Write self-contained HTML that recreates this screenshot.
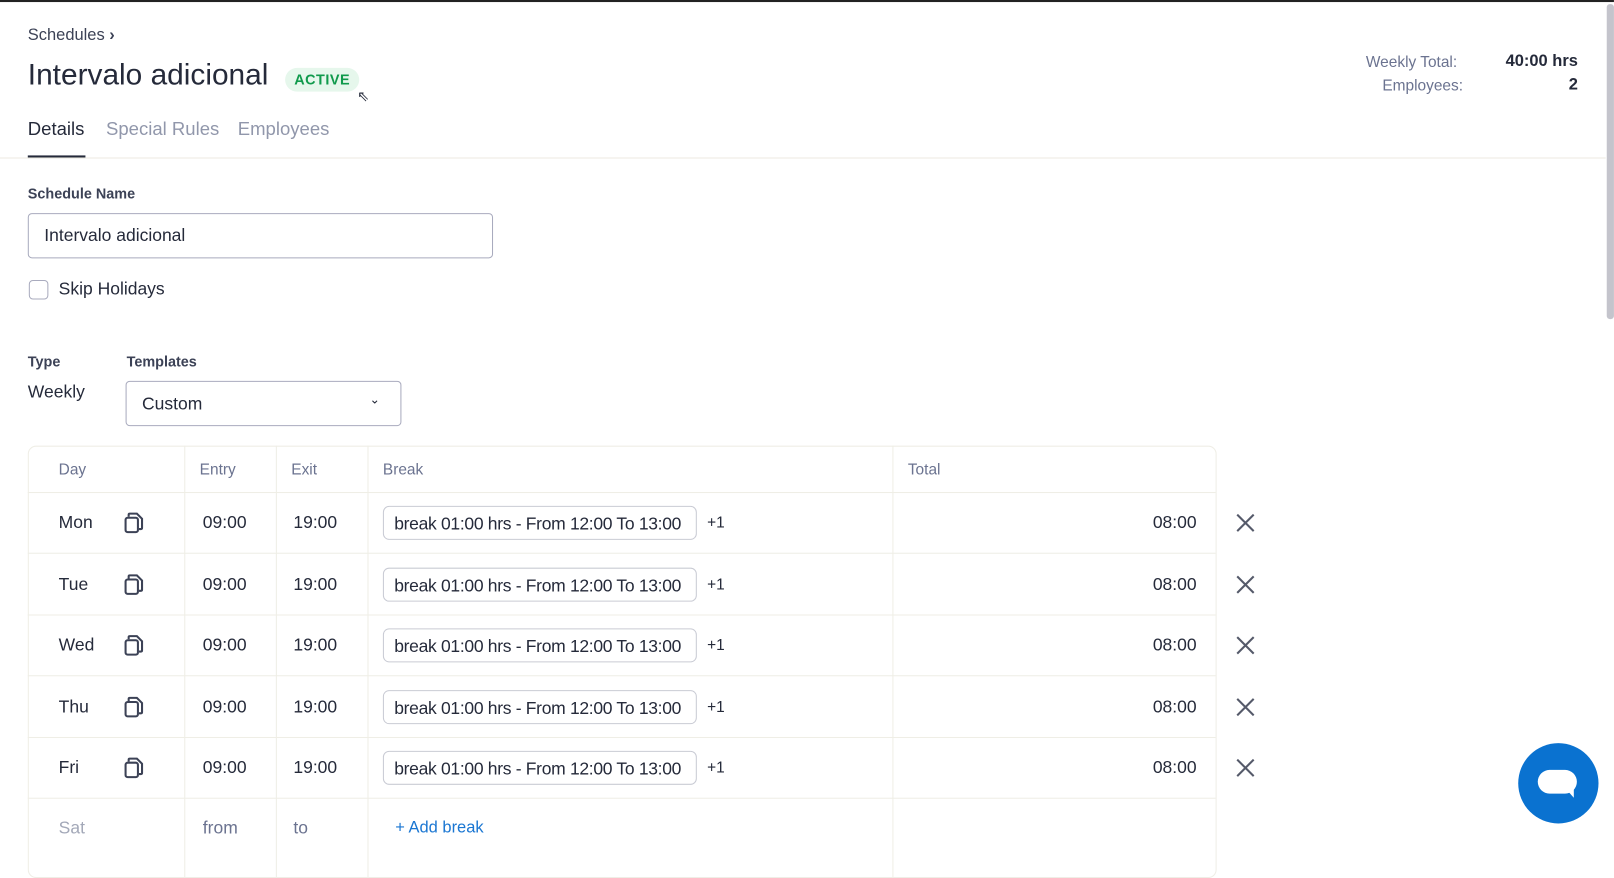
<!DOCTYPE html>
<html><head><style>
*{box-sizing:border-box;margin:0;padding:0}
body{width:1614px;height:840px;overflow:hidden;background:#fff;font-family:"Liberation Sans",sans-serif;color:#252a3a;position:relative}
#w{position:absolute;left:0;top:0;width:1568px;height:816px;transform:scale(1.0293);transform-origin:0 0}
.a{position:absolute;white-space:nowrap}
.muted{color:#6b7390}
.row{position:absolute;left:27px;width:1154px;border-top:1px solid #efeee6}
.cell{position:absolute;font-size:17px;top:50%;transform:translateY(-50%)}
.pill{position:absolute;left:345px;width:305px;height:33px;top:50%;transform:translateY(-50%);border:1px solid #c9cbd4;border-radius:6px;font-size:17px;padding:7px 0 0 10px;letter-spacing:-0.3px}
.x{position:absolute;left:1174px;top:50%;transform:translateY(-50%)}
</style></head><body><div id="w">
<div class="a" style="left:0;top:0;width:1568px;height:2px;background:#222"></div>
<div class="a" style="left:1561px;top:4px;width:7px;height:306px;background:#c4c4cc;border-radius:3px"></div>
<div class="a" style="left:27px;top:26px;font-size:16px;color:#3c4256">Schedules <span style="font-weight:bold">›</span></div>
<div class="a" style="left:27px;top:57px;font-size:29px;color:#252a3a">Intervalo adicional</div>
<div class="a" style="left:277px;top:66px;width:72px;height:23px;background:#e6f7ec;border-radius:12px;color:#109a4c;font-size:14px;font-weight:bold;text-align:center;line-height:23px;letter-spacing:.5px">ACTIVE</div>
<div class="a" style="left:347px;top:85px;font-size:14px">⇖</div>
<div class="a" style="left:27px;top:115px;font-size:18px">Details</div>
<div class="a" style="left:27px;top:151px;width:56px;height:3px;background:#252a3a"></div>
<div class="a muted" style="left:103px;top:115px;font-size:18px;color:#9197ab">Special Rules</div>
<div class="a muted" style="left:231px;top:115px;font-size:18px;color:#9197ab">Employees</div>
<div class="a" style="left:0;top:153px;width:1560px;height:1px;background:#eceae2"></div>
<div class="a muted" style="left:1327px;top:52px;font-size:15px">Weekly Total:</div>
<div class="a muted" style="left:1343px;top:75px;font-size:15px">Employees:</div>
<div class="a" style="right:35px;top:51px;font-size:16px;font-weight:bold">40:00 hrs</div>
<div class="a" style="right:35px;top:74px;font-size:16px;font-weight:bold">2</div>
<div class="a" style="left:27px;top:180px;font-size:14px;font-weight:bold;color:#3c4256">Schedule Name</div>
<div class="a" style="left:27px;top:207px;width:452px;height:44px;border:1px solid #a9abbe;border-radius:4px;font-size:17px;padding:11px 0 0 15px">Intervalo adicional</div>
<div class="a" style="left:28px;top:272px;width:19px;height:19px;border:1px solid #a9abbe;border-radius:4px"></div>
<div class="a" style="left:57px;top:271px;font-size:17px">Skip Holidays</div>
<div class="a" style="left:27px;top:343px;font-size:14px;font-weight:bold;color:#3c4256">Type</div>
<div class="a" style="left:123px;top:343px;font-size:14px;font-weight:bold;color:#3c4256">Templates</div>
<div class="a" style="left:27px;top:371px;font-size:17px">Weekly</div>
<div class="a" style="left:122px;top:370px;width:268px;height:44px;border:1px solid #a9abbe;border-radius:4px;font-size:17px;padding:12px 0 0 15px">Custom<span style="position:absolute;left:236px;top:10px;font-size:12px">⌄</span></div>
<div class="a" style="left:27px;top:433px;width:1155px;height:420px;border:1px solid #efeee6;border-radius:8px"></div>
<div class="a" style="left:179px;top:433px;width:1px;height:420px;background:#efeee6"></div>
<div class="a" style="left:268px;top:433px;width:1px;height:420px;background:#efeee6"></div>
<div class="a" style="left:357px;top:433px;width:1px;height:420px;background:#efeee6"></div>
<div class="a" style="left:867px;top:433px;width:1px;height:420px;background:#efeee6"></div>
<div class="a muted" style="left:57px;top:448px;font-size:15px">Day</div>
<div class="a muted" style="left:194px;top:448px;font-size:15px">Entry</div>
<div class="a muted" style="left:283px;top:448px;font-size:15px">Exit</div>
<div class="a muted" style="left:372px;top:448px;font-size:15px">Break</div>
<div class="a muted" style="left:882px;top:448px;font-size:15px">Total</div>
<div class="row" style="top:478px;height:59px"><span class="cell" style="left:30px">Mon</span><svg class="cell" style="left:93px" width="20" height="22" viewBox="0 0 20 22" fill="none" stroke="#3c4256" stroke-width="2"><path d="M5 5V3a1 1 0 011-1h7l5 5v9a1 1 0 01-1 1h-2"/><rect x="2" y="6" width="12" height="14" rx="2"/></svg><span class="cell" style="left:170px">09:00</span><span class="cell" style="left:258px">19:00</span><div class="pill">break 01:00 hrs - From 12:00 To 13:00</div><span class="cell" style="left:660px;font-size:15px">+1</span><span class="cell" style="left:1093px">08:00</span><svg class="x" width="18" height="18" viewBox="0 0 18 18" stroke="#555a6a" stroke-width="2"><path d="M1 1L17 17M17 1L1 17"/></svg></div>
<div class="row" style="top:537px;height:60px"><span class="cell" style="left:30px">Tue</span><svg class="cell" style="left:93px" width="20" height="22" viewBox="0 0 20 22" fill="none" stroke="#3c4256" stroke-width="2"><path d="M5 5V3a1 1 0 011-1h7l5 5v9a1 1 0 01-1 1h-2"/><rect x="2" y="6" width="12" height="14" rx="2"/></svg><span class="cell" style="left:170px">09:00</span><span class="cell" style="left:258px">19:00</span><div class="pill">break 01:00 hrs - From 12:00 To 13:00</div><span class="cell" style="left:660px;font-size:15px">+1</span><span class="cell" style="left:1093px">08:00</span><svg class="x" width="18" height="18" viewBox="0 0 18 18" stroke="#555a6a" stroke-width="2"><path d="M1 1L17 17M17 1L1 17"/></svg></div>
<div class="row" style="top:597px;height:59px"><span class="cell" style="left:30px">Wed</span><svg class="cell" style="left:93px" width="20" height="22" viewBox="0 0 20 22" fill="none" stroke="#3c4256" stroke-width="2"><path d="M5 5V3a1 1 0 011-1h7l5 5v9a1 1 0 01-1 1h-2"/><rect x="2" y="6" width="12" height="14" rx="2"/></svg><span class="cell" style="left:170px">09:00</span><span class="cell" style="left:258px">19:00</span><div class="pill">break 01:00 hrs - From 12:00 To 13:00</div><span class="cell" style="left:660px;font-size:15px">+1</span><span class="cell" style="left:1093px">08:00</span><svg class="x" width="18" height="18" viewBox="0 0 18 18" stroke="#555a6a" stroke-width="2"><path d="M1 1L17 17M17 1L1 17"/></svg></div>
<div class="row" style="top:656px;height:60px"><span class="cell" style="left:30px">Thu</span><svg class="cell" style="left:93px" width="20" height="22" viewBox="0 0 20 22" fill="none" stroke="#3c4256" stroke-width="2"><path d="M5 5V3a1 1 0 011-1h7l5 5v9a1 1 0 01-1 1h-2"/><rect x="2" y="6" width="12" height="14" rx="2"/></svg><span class="cell" style="left:170px">09:00</span><span class="cell" style="left:258px">19:00</span><div class="pill">break 01:00 hrs - From 12:00 To 13:00</div><span class="cell" style="left:660px;font-size:15px">+1</span><span class="cell" style="left:1093px">08:00</span><svg class="x" width="18" height="18" viewBox="0 0 18 18" stroke="#555a6a" stroke-width="2"><path d="M1 1L17 17M17 1L1 17"/></svg></div>
<div class="row" style="top:716px;height:59px"><span class="cell" style="left:30px">Fri</span><svg class="cell" style="left:93px" width="20" height="22" viewBox="0 0 20 22" fill="none" stroke="#3c4256" stroke-width="2"><path d="M5 5V3a1 1 0 011-1h7l5 5v9a1 1 0 01-1 1h-2"/><rect x="2" y="6" width="12" height="14" rx="2"/></svg><span class="cell" style="left:170px">09:00</span><span class="cell" style="left:258px">19:00</span><div class="pill">break 01:00 hrs - From 12:00 To 13:00</div><span class="cell" style="left:660px;font-size:15px">+1</span><span class="cell" style="left:1093px">08:00</span><svg class="x" width="18" height="18" viewBox="0 0 18 18" stroke="#555a6a" stroke-width="2"><path d="M1 1L17 17M17 1L1 17"/></svg></div>
<div class="row" style="top:775px;height:59px"><span class="cell" style="left:30px;color:#a3a8b8">Sat</span><span class="cell" style="left:170px;color:#6b7390">from</span><span class="cell" style="left:258px;color:#6b7390">to</span><span class="cell" style="left:357px;color:#1a76d2;font-size:16px">+ Add break</span></div>
<div class="a" style="left:1475px;top:722px;width:78px;height:78px;border-radius:50%;background:#0a72d0"></div>
<div class="a" style="left:1494px;top:748px;width:38px;height:23px;border-radius:12px;background:#fff"></div>
<div class="a" style="left:1521px;top:766px;width:0;height:0;border-left:8px solid transparent;border-top:9px solid #fff"></div>
</div></body></html>
